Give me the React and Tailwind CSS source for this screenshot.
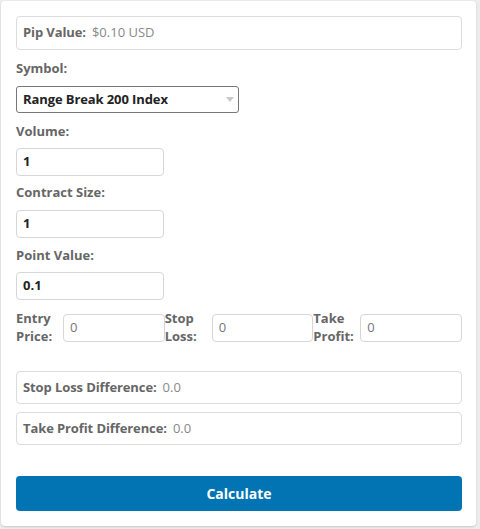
import React from "react";

const font = { fontFamily: '"Open Sans", "Noto Sans", sans-serif' };

function Label({ children, className = "" }) {
  return (
    <div className={"text-[13px] leading-[16px] font-bold text-[#666] " + className}>{children}</div>
  );
}

function NumInput({ value, className = "" }) {
  return (
    <div
      className={
        "h-[28px] w-[148px] border border-[#d6d6d6] rounded-[4px] flex items-center px-[6px] text-[13px] font-bold text-[#222] " +
        className
      }
    >
      {value}
    </div>
  );
}

function InfoBox({ label, value, className = "" }) {
  return (
    <div
      className={
        "h-[33px] w-full border border-[#dcdcdc] rounded-[4px] flex items-center px-[6px] text-[13px] " +
        className
      }
    >
      <span className="font-bold text-[#666] tracking-[-0.1px]">{label}</span>
      <span className="ml-[6px] text-[#888]">{value}</span>
    </div>
  );
}

function PriceField({ l1, l2, value }) {
  return (
    <div className="flex-1 flex items-start">
      <div className="w-[47px] text-[13px] leading-[18px] font-bold text-[#666]">
        {l1}
        <br />
        {l2}
      </div>
      <div className="mt-[5px] h-[28px] flex-1 border border-[#d6d6d6] rounded-[4px] flex items-center px-[6px] text-[13px] text-[#777]">
        {value}
      </div>
    </div>
  );
}

export default function App() {
  return (
    <div className="w-[480px] h-[529px] bg-[#ececec] pt-[1px] pl-[1px]" style={font}>
      <div className="w-[475px] h-[525px] bg-white rounded-[4px] shadow-[0_1px_2px_rgba(0,0,0,0.15)] pt-[15px] pl-[15px] pr-[14px] flex flex-col">
        <InfoBox label="Pip Value:" value="$0.10 USD" className="h-[34px]" />
        <Label className="mt-[10px]">Symbol:</Label>
        <div className="mt-[10px] w-[223px] h-[27px] border border-[#777] rounded-[3px] flex items-center justify-between pl-[6px] pr-[4px]">
          <span className="text-[13px] font-bold text-[#222] tracking-[-0.1px]">Range Break 200 Index</span>
          <svg width="8" height="5" viewBox="0 0 8 5">
            <path d="M0 0 L8 0 L4 5 Z" fill="#c8c8c8" />
          </svg>
        </div>
        <Label className="mt-[10px]">Volume:</Label>
        <NumInput value="1" className="mt-[9px]" />
        <Label className="mt-[8px]">Contract Size:</Label>
        <NumInput value="1" className="mt-[10px]" />
        <Label className="mt-[9px]">Point Value:</Label>
        <NumInput value="0.1" className="mt-[9px]" />
        <div className="mt-[9px] flex">
          <PriceField l1="Entry" l2="Price:" value="0" />
          <PriceField l1="Stop" l2="Loss:" value="0" />
          <PriceField l1="Take" l2="Profit:" value="0" />
        </div>
        <InfoBox label="Stop Loss Difference:" value="0.0" className="mt-[26px]" />
        <InfoBox label="Take Profit Difference:" value="0.0" className="mt-[8px]" />
        <button className="mt-[31px] h-[35px] w-full bg-[#0274b3] rounded-[4px] text-white text-[14px] font-bold">
          Calculate
        </button>
      </div>
    </div>
  );
}
